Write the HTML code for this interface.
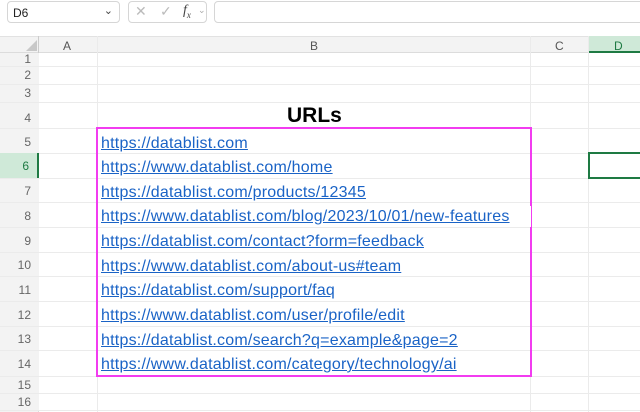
<!DOCTYPE html>
<html><head><meta charset="utf-8"><style>
*{margin:0;padding:0;box-sizing:border-box}
body{width:640px;height:412px;overflow:hidden;background:#fff;font-family:"Liberation Sans",sans-serif;position:relative}
.a{position:absolute}
.hl{position:absolute;left:0;width:640px;height:1px;background:#ebebeb}
.vl{position:absolute;top:36px;width:1px;height:376px;background:#ebebeb}
.rn{position:absolute;left:0;width:39px;text-align:right;padding-right:8px;font-size:12px;color:#666;background:#f3f3f3}
.u{position:absolute;left:101px;font-size:16px;color:#1a63c6;text-decoration:underline;white-space:nowrap;letter-spacing:0.22px}
</style></head><body>
<div class="a" style="left:0;top:0;width:640px;height:36px;background:#fff"></div>
<div class="a" style="left:7px;top:1px;width:113px;height:22px;border:1px solid #d6d6d6;border-radius:4px;font-size:12px;padding:4px 5px;color:#222">D6<span style="position:absolute;right:6px;top:2px;font-size:11px;color:#444">&#8964;</span></div>
<div class="a" style="left:128px;top:1px;width:79px;height:22px;border:1px solid #d6d6d6;border-radius:4px;color:#bbb;font-size:14px"><span class="a" style="left:6px;top:1px">✕</span><span class="a" style="left:31px;top:1px">✓</span><span class="a" style="left:54px;top:1px;color:#444;font-style:italic;font-family:'Liberation Serif',serif">f<sub style="font-size:9px">x</sub></span><span class="a" style="left:69px;top:3px;font-size:9px;color:#aaa">&#8964;</span></div>
<div class="a" style="left:214px;top:1px;width:430px;height:22px;border:1px solid #d6d6d6;border-radius:4px"></div>
<div class="a" style="left:0;top:36px;width:640px;height:17px;background:#f3f3f3;border-top:1px solid #e2e2e2;border-bottom:1px solid #dcdcdc"></div>
<div class="a" style="left:588px;top:36px;width:52px;height:17px;background:#cfe9d8;border-bottom:2px solid #1e7a43"></div>
<div class="a" style="left:0;top:53px;width:39px;height:359px;background:#f3f3f3;border-right:1px solid #dcdcdc"></div>
<div class="a" style="left:38px;top:36px;width:1px;height:17px;background:#ccc"></div>
<div class="a" style="left:26px;top:40px;width:0;height:0;border-left:11px solid transparent;border-bottom:11px solid #c8c8c8"></div>
<div class="a" style="left:63px;top:39px;font-size:12px;color:#555">A</div>
<div class="a" style="left:310px;top:39px;font-size:12px;color:#555">B</div>
<div class="a" style="left:555px;top:39px;font-size:12px;color:#555">C</div>
<div class="a" style="left:614px;top:39px;font-size:12px;color:#1e7a43">D</div>
<div class="vl" style="left:97px"></div><div class="vl" style="left:530px"></div><div class="vl" style="left:588px"></div>
<div class="hl" style="top:66px"></div><div class="hl" style="top:84px"></div><div class="hl" style="top:102px"></div><div class="hl" style="top:128px"></div>
<div class="hl" style="top:153px"></div><div class="hl" style="top:178px"></div><div class="hl" style="top:202px"></div><div class="hl" style="top:227px"></div><div class="hl" style="top:252px"></div><div class="hl" style="top:276px"></div><div class="hl" style="top:301px"></div><div class="hl" style="top:326px"></div><div class="hl" style="top:350px"></div><div class="hl" style="top:376px"></div><div class="hl" style="top:393px"></div><div class="hl" style="top:410px"></div>
<div class="rn" style="top:53px;height:13px;line-height:13px">1</div>
<div class="rn" style="top:67px;height:17px;line-height:17px">2</div>
<div class="rn" style="top:85px;height:17px;line-height:17px">3</div>
<div class="rn" style="top:103px;height:25px;line-height:30px">4</div>
<div class="rn" style="top:129px;height:24px;line-height:26px">5</div>
<div class="rn" style="top:153px;height:25px;line-height:27px;background:#cfe9d8;color:#1e7a43;border-right:2px solid #1e7a43">6</div>
<div class="rn" style="top:179px;height:23px;line-height:25px">7</div>
<div class="rn" style="top:203px;height:24px;line-height:26px">8</div>
<div class="rn" style="top:228px;height:24px;line-height:26px">9</div>
<div class="rn" style="top:253px;height:23px;line-height:25px">10</div>
<div class="rn" style="top:277px;height:24px;line-height:26px">11</div>
<div class="rn" style="top:302px;height:24px;line-height:26px">12</div>
<div class="rn" style="top:327px;height:23px;line-height:25px">13</div>
<div class="rn" style="top:351px;height:25px;line-height:27px">14</div>
<div class="rn" style="top:377px;height:16px;line-height:16px">15</div>
<div class="rn" style="top:394px;height:16px;line-height:16px">16</div>
<div class="a" style="left:287px;top:104px;font-size:21px;font-weight:bold;color:#000">URLs</div>
<div class="a" style="left:96px;top:127px;width:436px;height:250px;border:2px solid #f23cf0"></div>
<div class="a" style="left:588px;top:152px;width:54px;height:27px;border:2px solid #1e7a43"></div>
<div class="u" style="top:135px">https://datablist.com</div>
<div class="u" style="top:159px">https://www.datablist.com/home</div>
<div class="u" style="top:184px">https://datablist.com/products/12345</div>
<div class="u" style="top:206px;background:#fff;padding-right:21px;padding-top:2px;height:21px">https://www.datablist.com/blog/2023/10/01/new-features</div>
<div class="u" style="top:233px">https://datablist.com/contact?form=feedback</div>
<div class="u" style="top:258px">https://www.datablist.com/about-us#team</div>
<div class="u" style="top:282px">https://datablist.com/support/faq</div>
<div class="u" style="top:307px">https://www.datablist.com/user/profile/edit</div>
<div class="u" style="top:332px">https://datablist.com/search?q=example&amp;page=2</div>
<div class="u" style="top:356px">https://www.datablist.com/category/technology/ai</div>
</body></html>
